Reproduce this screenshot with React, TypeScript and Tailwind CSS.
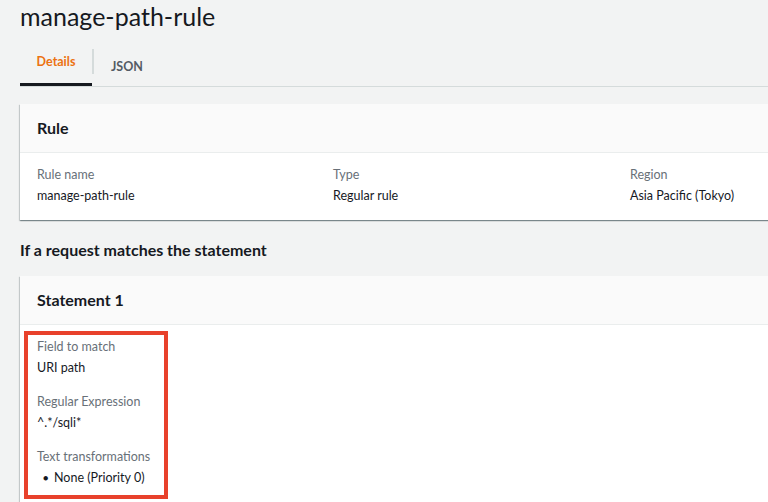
import React from "react";

const font = { fontFamily: 'Lato, "Noto Sans", Arial, sans-serif' };

const Field = ({ label, value }: { label: string; value: React.ReactNode }) => (
  <div className="flex flex-col whitespace-nowrap">
    <div className="text-[12.5px] leading-[21px] text-[#687078]">{label}</div>
    <div className="text-[12.5px] leading-[21px] text-[#16191f]">{value}</div>
  </div>
);

const App = () => {
  return (
    <div
      className="w-[768px] h-[502px] overflow-hidden bg-[#f2f3f3] pl-[20px] text-[#16191f]"
      style={font}
    >
      <h1 className="text-[25px] leading-[32px] font-normal">manage-path-rule</h1>

      {/* tabs */}
      <div className="mt-[10px] flex items-start border-b border-[#d5dbdb] w-[800px]">
        <div className="w-[72px] h-[44px] pt-[11px] flex justify-center border-b-[3px] border-[#16191f] -mb-[1px]">
          <span className="text-[12.5px] leading-[18px] font-bold text-[#ec7211]">Details</span>
        </div>
        <div className="mt-[7px] w-[2px] h-[25px] bg-[#d5dbdb]" />
        <div className="h-[44px] pt-[11px] pl-[17px]">
          <span className="text-[12.5px] leading-[18px] font-bold text-[#545b64]">JSON</span>
        </div>
      </div>

      {/* rule card */}
      <div className="mt-[17px] w-[800px] bg-white shadow-[0_1px_1px_0_rgba(0,28,36,0.3),1px_1px_1px_0_rgba(0,28,36,0.15),-1px_1px_1px_0_rgba(0,28,36,0.15)]">
        <div className="h-[49px] bg-[#fafafa] border-b border-[#eaeded] flex items-center px-[17px]">
          <h2 className="text-[16px] font-bold">Rule</h2>
        </div>
        <div className="h-[67px] pt-[11px] px-[17px] grid grid-cols-[296px_297px_1fr]">
          <Field label="Rule name" value="manage-path-rule" />
          <Field label="Type" value="Regular rule" />
          <Field label="Region" value="Asia Pacific (Tokyo)" />
        </div>
      </div>

      <h2 className="mt-[19px] text-[16px] leading-[22px] font-bold">
        If a request matches the statement
      </h2>

      {/* statement card */}
      <div className="mt-[15px] w-[800px] h-[240px] bg-white shadow-[0_1px_1px_0_rgba(0,28,36,0.3),1px_1px_1px_0_rgba(0,28,36,0.15),-1px_1px_1px_0_rgba(0,28,36,0.15)]">
        <div className="h-[49px] bg-[#fafafa] border-b border-[#eaeded] flex items-center px-[17px]">
          <h2 className="text-[16px] font-bold">Statement 1</h2>
        </div>
        <div className="pt-[6px] pl-[4px]">
          <div className="w-[144px] border-[4px] border-[#e8412b] pl-[9px] pt-[1px] pb-[7px] flex flex-col gap-[13px]">
            <Field label="Field to match" value="URI path" />
            <Field label="Regular Expression" value="^.*/sqli*" />
            <Field
              label="Text transformations"
              value={
                <ul className="list-none">
                  <li className="flex items-center">
                    <span className="w-[17px] pl-[6px] text-[9px]">●</span>
                    <span>None (Priority 0)</span>
                  </li>
                </ul>
              }
            />
          </div>
        </div>
      </div>
    </div>
  );
};

export default App;
